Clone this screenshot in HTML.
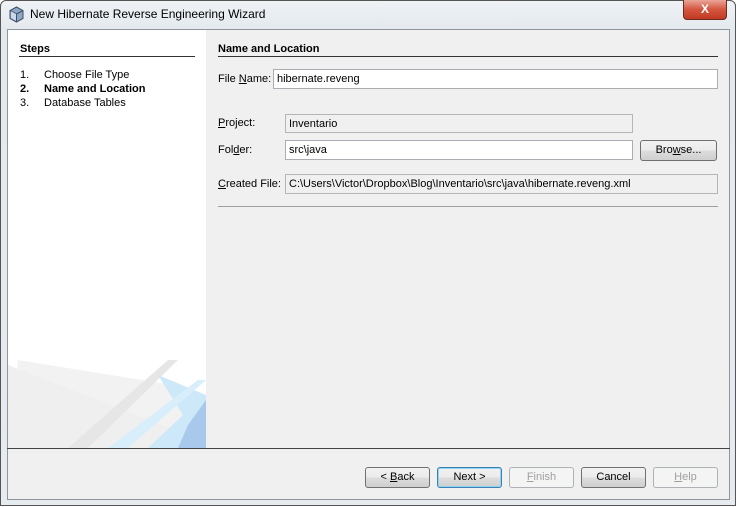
<!DOCTYPE html>
<html><head><style>
*{margin:0;padding:0;box-sizing:border-box}
body{width:737px;height:507px;overflow:hidden;background:#fff;font-family:"Liberation Sans",sans-serif;font-size:11px;color:#000;position:relative}
.a{position:absolute}
.win{left:0;top:0;width:736px;height:506px;border:1px solid #555;border-radius:6px 6px 0 0;background:linear-gradient(180deg,#eef2f5,#e4e9ee 30px,#e6ebf0);}
.t{white-space:nowrap;line-height:13px}
.fld{border:1px solid #abadb3;background:#fff;height:20px;padding:3px 3px;line-height:12px}
.ro{background:#f0f0f0;border-color:#b5b5b5}
.btn{height:21px;border:1px solid #707070;border-radius:3px;background:linear-gradient(#f2f2f2,#ebebeb 50%,#dddddd 51%,#cfcfcf);text-align:center;line-height:19px}
.dis{border-color:#adb2b5;background:#f4f4f4;color:#a0a0a0}
u{text-decoration:underline}
</style></head><body>
<div class="a win"></div>
<svg class="a" style="left:8px;top:6px" width="17" height="17" viewBox="0 0 17 17"><path d="M8.5 1 L15 4.5 V12.5 L8.5 16 L2 12.5 V4.5 Z" fill="#8fa6c4" stroke="#3d4e68"/><path d="M2 4.5 L8.5 8 L15 4.5 M8.5 8 V16" stroke="#3d4e68" fill="none"/><path d="M3 5.2 L8 8 V14.8 L3 12 Z" fill="#cdd8e8"/></svg>
<div class="a t" style="left:30px;top:8px;font-size:12px">New Hibernate Reverse Engineering Wizard</div>
<div class="a" style="left:683px;top:0;width:44px;height:20px;border:1px solid #6d2a22;border-top:none;border-radius:0 0 4px 4px;background:linear-gradient(#e9a598,#d4553f 50%,#c23a22);color:#fff;font-weight:bold;text-align:center;font-size:12px;line-height:18px">X</div>
<div class="a" style="left:7px;top:29px;width:723px;height:471px;background:#f0f0f0;border:1px solid #8e959c"></div>
<div class="a" style="left:8px;top:30px;width:198px;height:418px;background:#fff;overflow:hidden">
<svg width="198" height="418"><polygon points="10,330 165,355 198,430 0,430" fill="#f2f2f2"/><polygon points="0,335 180,405 190,418 0,418" fill="#efefef"/><polygon points="60,418 160,330 170,330 80,418" fill="#e6e6e6"/><polygon points="150,345 198,365 198,418 140,418 175,385" fill="#cde8f9"/><polygon points="180,395 198,370 198,418 170,418" fill="#a9c9ec"/><polygon points="100,418 190,350 198,350 120,418" fill="#d9eefb"/></svg>
</div>
<div class="a t" style="left:20px;top:43px;font-weight:bold">Steps</div>
<div class="a" style="left:19px;top:56px;width:176px;height:1px;background:#333"></div>
<div class="a t" style="left:20px;top:69px">1.</div><div class="a t" style="left:44px;top:69px">Choose File Type</div>
<div class="a t" style="left:20px;top:83px;font-weight:bold">2.</div><div class="a t" style="left:44px;top:83px;font-weight:bold">Name and Location</div>
<div class="a t" style="left:20px;top:97px">3.</div><div class="a t" style="left:44px;top:97px">Database Tables</div>
<div class="a t" style="left:218px;top:43px;font-weight:bold">Name and Location</div>
<div class="a" style="left:218px;top:56px;width:500px;height:1px;background:#333"></div>
<div class="a t" style="left:218px;top:73px">File <u>N</u>ame:</div>
<div class="a fld" style="left:273px;top:69px;width:445px">hibernate.reveng</div>
<div class="a t" style="left:218px;top:117px"><u>P</u>roject:</div>
<div class="a fld ro" style="left:285px;top:114px;width:348px;height:19px">Inventario</div>
<div class="a t" style="left:218px;top:144px">Fol<u>d</u>er:</div>
<div class="a fld" style="left:285px;top:140px;width:348px">src\java</div>
<div class="a btn" style="left:640px;top:140px;width:77px">Bro<u>w</u>se...</div>
<div class="a t" style="left:218px;top:178px"><u>C</u>reated File:</div>
<div class="a fld ro" style="left:285px;top:174px;width:433px">C:\Users\Victor\Dropbox\Blog\Inventario\src\java\hibernate.reveng.xml</div>
<div class="a" style="left:218px;top:206px;width:500px;height:1px;background:#a0a0a0"></div>
<div class="a" style="left:7px;top:448px;width:723px;height:1px;background:#444"></div>
<div class="a btn" style="left:365px;top:467px;width:65px">&lt; <u>B</u>ack</div>
<div class="a btn" style="left:437px;top:467px;width:65px;border-color:#3c7fb1;box-shadow:inset 0 0 0 1px #8fd3f5">Next &gt;</div>
<div class="a btn dis" style="left:509px;top:467px;width:65px"><u>F</u>inish</div>
<div class="a btn" style="left:581px;top:467px;width:65px">Cancel</div>
<div class="a btn dis" style="left:653px;top:467px;width:65px"><u>H</u>elp</div>
</body></html>
